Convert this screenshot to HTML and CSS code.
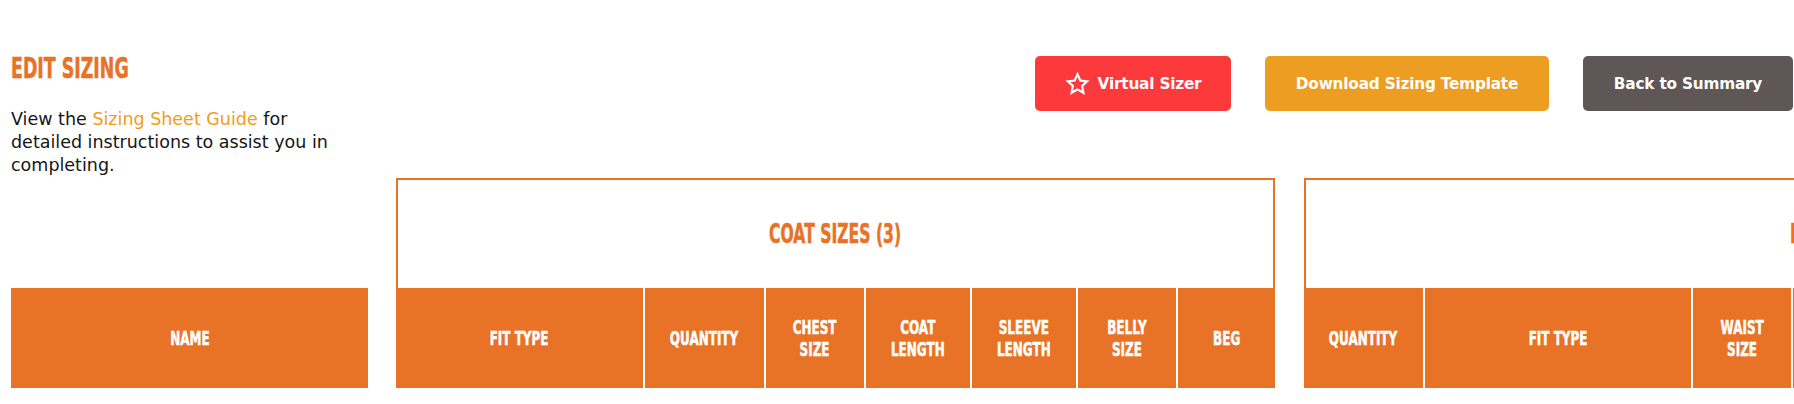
FILE: index.html
```html
<!DOCTYPE html>
<html lang="en">
<head>
<meta charset="utf-8">
<title>Edit Sizing</title>
<link rel="stylesheet" href="styles.css">
</head>
<body>
<div class="page">
  <header class="top">
    <div class="intro">
      <h1 class="title"><span class="narrow narrow-left">EDIT SIZING</span></h1>
      <p class="lead">View the <a class="link" href="#">Sizing Sheet Guide</a> for detailed instructions to assist you in completing.</p>
    </div>
    <div class="actions">
      <a class="btn btn-red" href="#">
        <svg class="star" viewBox="0 0 24 24" width="25" height="24" aria-hidden="true"><polygon points="12,2.2 14.9,8.6 21.6,9.4 16.6,14 17.9,20.8 12,17.4 6.1,20.8 7.4,14 2.4,9.4 9.1,8.6" fill="none" stroke="#fff" stroke-width="2.2" stroke-linejoin="miter"/></svg>
        <span>Virtual Sizer</span>
      </a>
      <a class="btn btn-amber" href="#">Download Sizing Template</a>
      <a class="btn btn-grey" href="#">Back to Summary</a>
    </div>
  </header>

  <section class="sheet">
    <div class="group group-name">
      <div class="group-spacer"></div>
      <div class="heads">
        <div class="cell w-name"><span class="narrow">NAME</span></div>
      </div>
    </div>

    <div class="group group-coat">
      <div class="group-title"><span class="narrow">COAT SIZES (3)</span></div>
      <div class="heads">
        <div class="cell w-fit"><span class="narrow">FIT TYPE</span></div>
        <div class="cell w-qty"><span class="narrow">QUANTITY</span></div>
        <div class="cell w-98"><span class="narrow">CHEST<br>SIZE</span></div>
        <div class="cell w-104"><span class="narrow">COAT<br>LENGTH</span></div>
        <div class="cell w-104"><span class="narrow">SLEEVE<br>LENGTH</span></div>
        <div class="cell w-98"><span class="narrow">BELLY<br>SIZE</span></div>
        <div class="cell w-97"><span class="narrow">BEG</span></div>
      </div>
    </div>

    <div class="group group-pant">
      <div class="group-title"><span class="narrow">PANT SIZES (2)</span></div>
      <div class="heads">
        <div class="cell w-qty"><span class="narrow">QUANTITY</span></div>
        <div class="cell w-fit2"><span class="narrow">FIT TYPE</span></div>
        <div class="cell w-98"><span class="narrow">WAIST<br>SIZE</span></div>
        <div class="cell w-98"><span class="narrow">HIP<br>SIZE</span></div>
        <div class="cell w-104"><span class="narrow">PANT<br>LENGTH</span></div>
        <div class="cell w-104"><span class="narrow">INSEAM</span></div>
        <div class="cell w-98"><span class="narrow">THIGH<br>SIZE</span></div>
        <div class="cell w-98"><span class="narrow">RISE</span></div>
        <div class="cell w-rest"><span class="narrow">BEG</span></div>
      </div>
    </div>
  </section>
</div>
</body>
</html>
```

FILE: styles.css
```css
* { box-sizing: border-box; }

html, body {
  margin: 0;
  padding: 0;
  background: #ffffff;
  overflow: hidden;
}

.page {
  width: 1794px;
  padding: 53px 1px 0 11px;
  overflow: hidden;
}

.top {
  display: flex;
  justify-content: space-between;
  align-items: flex-start;
  height: 125px;
}

/* condensed display face (Oswald-like) built from DejaVu Sans Bold */
.narrow {
  display: inline-block;
  white-space: nowrap;
  transform: scaleX(0.6);
  transform-origin: center;
  -webkit-text-stroke: 0.6px currentColor;
}
.narrow-left { transform-origin: left center; }

.title {
  margin: 0;
  font-family: "DejaVu Sans", sans-serif;
  font-weight: 700;
  font-size: 29px;
  line-height: 30px;
  color: #e87225;
}

.lead {
  margin: 25px 0 0 0;
  width: 340px;
  font-family: "DejaVu Sans", sans-serif;
  font-size: 17.5px;
  line-height: 23px;
  color: #161616;
}

.link {
  color: #f19c1c;
  text-decoration: none;
}

.actions {
  display: flex;
  gap: 34px;
  margin-top: 3px;
}

.btn {
  display: flex;
  align-items: center;
  justify-content: center;
  gap: 8px;
  height: 55px;
  border-radius: 5px;
  color: #ffffff;
  text-decoration: none;
  font-family: "DejaVu Sans", sans-serif;
  font-weight: 700;
  font-size: 15.3px;
  letter-spacing: -0.2px;
}

.btn-red { width: 196px; background: #fc3a3c; }
.btn-amber { width: 284px; background: #ec9d22; }
.btn-grey { width: 210px; background: #5e5756; }

.star { display: block; }

.sheet {
  display: flex;
  align-items: flex-end;
}

.group { flex: none; display: flex; flex-direction: column; }
.group-name { width: 357px; }
.group-coat { width: 879px; margin-left: 28px; }
.group-pant { width: 1104px; margin-left: 29px; }

.group-spacer { height: 110px; }

.group-title {
  height: 110px;
  border: 2px solid #e87225;
  border-bottom: none;
  display: flex;
  align-items: center;
  justify-content: center;
  font-family: "DejaVu Sans", sans-serif;
  font-weight: 700;
  font-size: 26px;
  color: #e87225;
}

.heads {
  display: flex;
  gap: 2px;
  height: 100px;
}

.cell {
  flex: none;
  display: flex;
  align-items: center;
  justify-content: center;
  text-align: center;
  background: #e87225;
  color: #ffffff;
  font-family: "DejaVu Sans", sans-serif;
  font-weight: 700;
  font-size: 20px;
  line-height: 22px;
}

.w-name { width: 357px; }
.w-fit { width: 247px; }
.w-fit2 { width: 266px; }
.w-qty { width: 119px; }
.w-98 { width: 98px; }
.w-97 { width: 97px; }
.w-104 { width: 104px; }
.w-rest { flex: 1; }
```
